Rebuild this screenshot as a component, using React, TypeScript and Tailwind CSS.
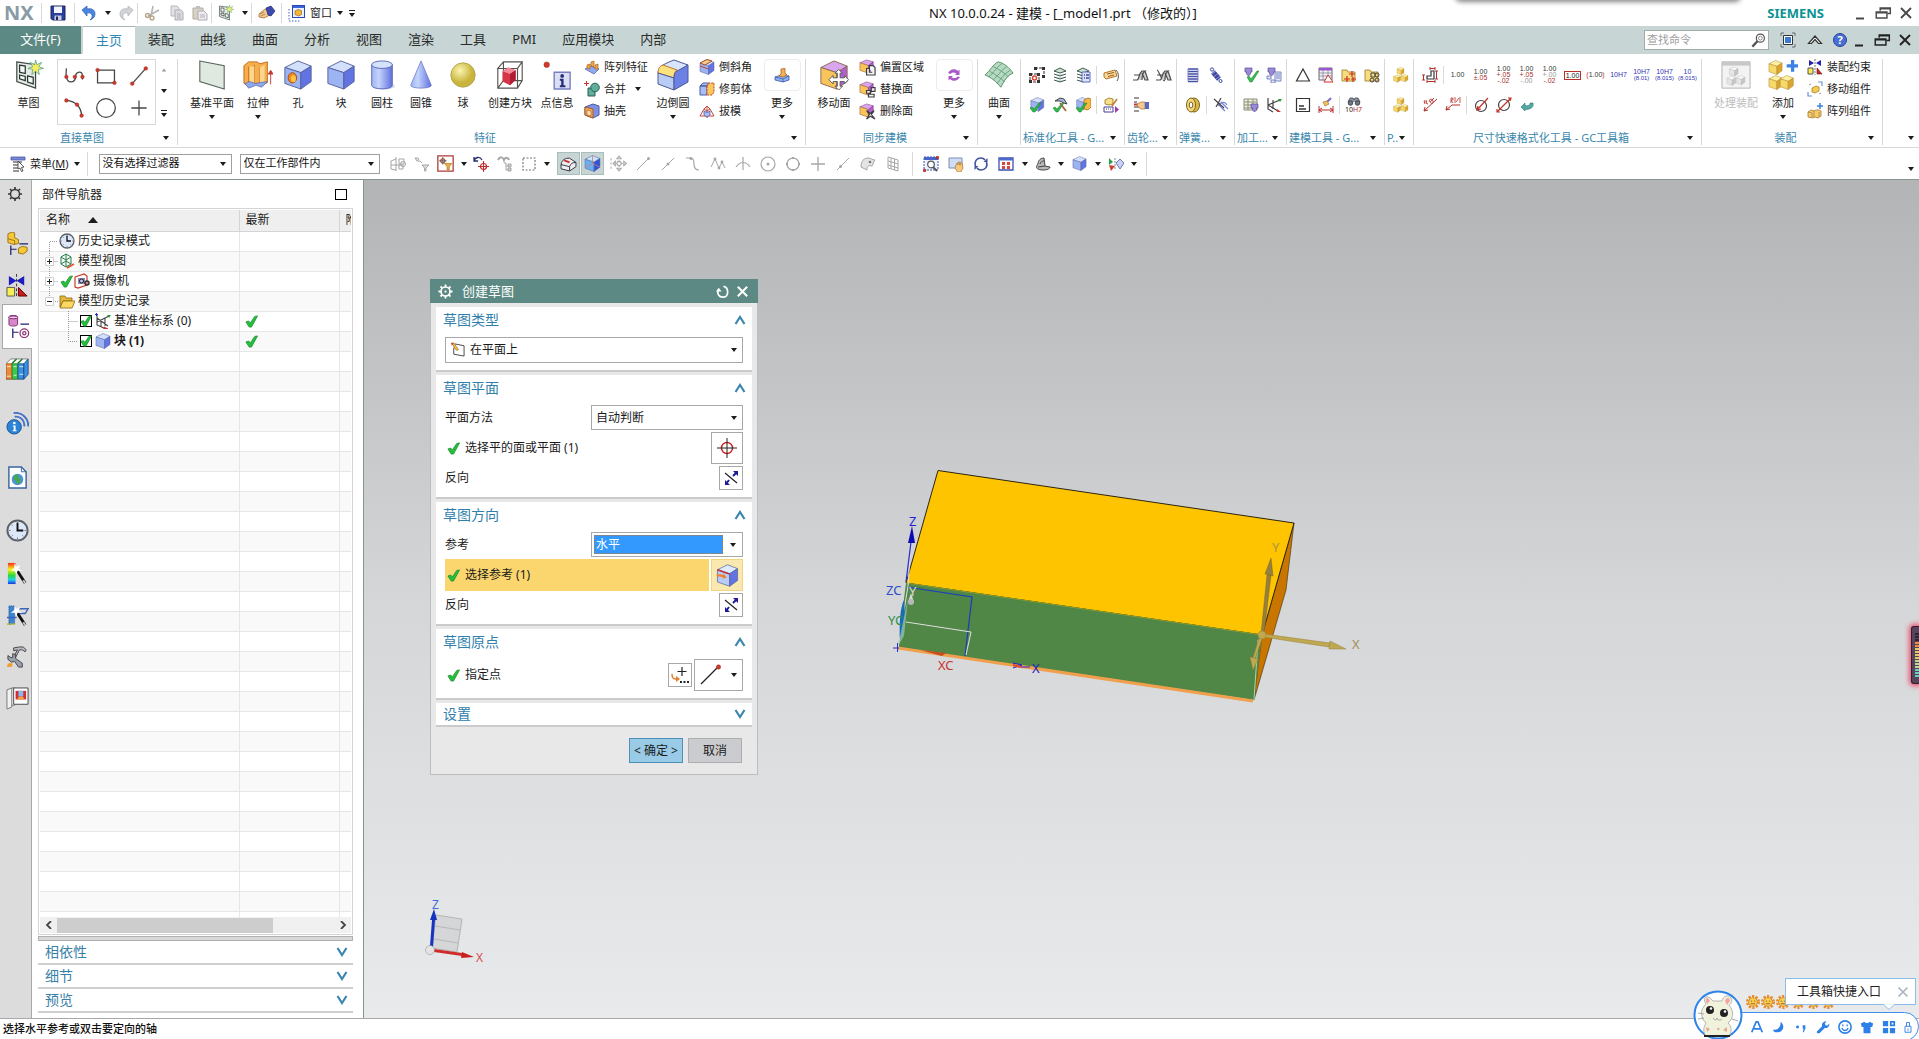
import { useState } from "react";
import type { ReactNode } from "react";
import clsx from "clsx";

/* ---------- shared bits ---------- */

interface SvgProps {
  box?: string;
  className?: string;
  children: ReactNode;
}

function Svg({ box = "0 0 16 16", className = "size-4", children }: SvgProps) {
  return (
    <svg viewBox={box} className={clsx("shrink-0", className)} fill="none" aria-hidden="true">
      {children}
    </svg>
  );
}

function Caret({ className = "" }: { className?: string }) {
  return (
    <svg viewBox="0 0 8 4" className={clsx("h-1 w-2 shrink-0", className)} aria-hidden="true">
      <path d="M1 0h6L4 4z" fill="#1c1c1c" />
    </svg>
  );
}

function OverflowCaret() {
  return (
    <svg viewBox="0 0 8 7" className="h-[7px] w-2 shrink-0" aria-hidden="true">
      <path d="M1 0h6v1H1zM1 3h6L4 7z" fill="#1c1c1c" />
    </svg>
  );
}

function Chevron({ up = false }: { up?: boolean }) {
  return (
    <Svg box="0 0 12 10" className="h-[10px] w-3">
      <path d={up ? "M1.500 9L6 2l4.500 7" : "M1.500 1L6 8l4.500-7"} stroke="#3c86ae" strokeWidth="2.2" />
    </Svg>
  );
}

function Check({ className = "size-[13px]" }: { className?: string }) {
  return (
    <Svg box="0 0 14 14" className={className}>
      <path d="M1 7.500l3-1 1.700 2L10.500 1.500l3-.5L7 13H4.500z" fill="#25c03a" stroke="#158a2c" strokeWidth=".8" />
    </Svg>
  );
}

interface CubeProps {
  top?: string;
  left?: string;
  right?: string;
  line?: string;
}

// drawn on a 32 x 32 grid
function CubeShape({ top = "#d3e0fb", left = "#9db4f2", right = "#6274e2", line = "#56619c" }: CubeProps) {
  return (
    <g stroke={line} strokeWidth="1" strokeLinejoin="round">
      <path d="M2 8L16 1l14 5.500-11 7z" fill={top} />
      <path d="M2 8l17 5.500V31L2 25z" fill={left} />
      <path d="M30 6.500V23l-11 8V13.500z" fill={right} />
    </g>
  );
}

function CubeIcon({ className = "size-4", children, ...faces }: CubeProps & { className?: string; children?: ReactNode }) {
  return (
    <Svg box="0 0 32 32" className={className}>
      <CubeShape {...faces} />
      {children}
    </Svg>
  );
}

const gold = { top: "#fdf0a0", left: "#f6d968", right: "#dca62c", line: "#a8812c" };
const pale = { top: "#f8f8f8", left: "#e6e6e6", right: "#c6c6c6", line: "#aaa" };

function YellowBlocks() {
  return (
    <Svg box="0 0 64 64">
      <g transform="translate(14 0)"><CubeShape {...gold} /></g>
      <g transform="translate(30 28)"><CubeShape {...gold} /></g>
      <g transform="translate(0 30)"><CubeShape {...gold} /></g>
    </Svg>
  );
}

/* ---------- quick access and window icons ---------- */

const saveIcon = (
  <Svg>
    <path d="M1 1h14v14H2.500L1 13.500z" fill="#2b3f9b" stroke="#1c2760" />
    <path d="M4 1.500h8V8H4z" fill="#f2f4ff" />
    <path d="M4.500 10.500h7V15h-7z" fill="#c9cee6" />
    <path d="M6 11.500h2V15H6z" fill="#1c2760" />
  </Svg>
);
const undoIcon = (
  <Svg>
    <path d="M1 5l5-4v3c5-1 8 1 8 5 0 3-2 5-5 6 2-2 2.500-3.500 2-5C10.300 8 8.500 7.500 6 8v3z" fill="#4a86e0" stroke="#2a5bb0" strokeWidth=".7" />
  </Svg>
);
const redoIcon = (
  <Svg>
    <path d="M15 5l-5-4v3C5 3 2 5 2 9c0 3 2 5 5 6-2-2-2.500-3.500-2-5C5.700 8 7.500 7.500 10 8v3z" fill="#d2d4d8" stroke="#a9adb3" strokeWidth=".7" />
  </Svg>
);
const cutIcon = (
  <Svg>
    <path d="M9 1L7 11M15 5L4 11" stroke="#b4b4b4" strokeWidth="1.600" />
    <circle cx="3.500" cy="10.500" r="1.900" stroke="#b8a890" strokeWidth="1.500" />
    <circle cx="8" cy="13" r="1.900" stroke="#b8a890" strokeWidth="1.500" />
  </Svg>
);
const copyIcon = (
  <Svg>
    <path d="M2 1h6l2 2v8H2z" fill="#e3e3e6" stroke="#b9b9be" />
    <path d="M6 5h6l2 2v8H6z" fill="#dcdce0" stroke="#aeaeb4" />
    <path d="M8 9h4M8 11h4M8 13h4" stroke="#b0b0b6" />
  </Svg>
);
const pasteIcon = (
  <Svg>
    <path d="M1 3h10v11H1z" fill="#d8d2c4" stroke="#b3ada0" />
    <path d="M4 1h4v3H4z" fill="#c0c0c0" />
    <path d="M6 6h6l3 3v6H6z" fill="#ececf0" stroke="#adadb3" />
    <path d="M8 10h5M8 12h5" stroke="#b0b0b6" />
  </Svg>
);
const touchIcon = (
  <Svg box="0 0 18 16" className="h-4 w-[18px]">
    <path d="M1 9l6-5 5 2v4l-6 3-5-1z" fill="#f0c890" stroke="#a87038" strokeWidth=".8" />
    <path d="M8 3l5-2 4 5-4 5-3-1z" fill="#3c4ab0" stroke="#20286a" strokeWidth=".7" />
    <path d="M2 9l4-2M3 11l4-2" stroke="#a87038" strokeWidth=".8" />
  </Svg>
);
const windowIcon = (
  <Svg box="0 0 18 18" className="size-[18px]">
    <path d="M1 5v12h11" stroke="#4060c8" strokeDasharray="1.500 1.500" />
    <rect x="4.500" y="1.500" width="12" height="12" fill="#eaf0ff" stroke="#2948b4" />
    <path d="M5 2h11v2H5z" fill="#3c64d8" />
    <path d="M7 7l3-1.500 3.500 1v4L10.500 12 7 10.500z" fill="#f2b838" stroke="#9c6a10" strokeWidth=".7" />
  </Svg>
);
const sketchShape = (
  <>
    <path d="M3 2l20 3v25L3 23z" fill="#e3ebe4" stroke="#3e4844" strokeWidth="1.300" />
    <path d="M6 5.500l6 1v8L6 13zM14.500 17l6 1.500v7l-6-2zM6 16l6 1.500V22l-6-2z" stroke="#2c3431" strokeWidth="1.300" fill="#f5f9f5" />
    <path d="M23 0l1.500 5 5-2.500-3 4.500 5 2-5.500 1 1 5.500-4-3.500-4 3.500 1-5.500-5-1 5-2-3-4.500 5 2.500z" fill="#f4ee60" stroke="#4e9a94" strokeWidth=".8" />
  </>
);

function WindowControls({ color, className }: { color: string; className: string }) {
  return (
    <div className={clsx("flex items-center gap-[6px]", className)}>
      <button type="button" aria-label="最小化">
        <Svg><path d="M4 13.500h8" stroke={color} strokeWidth="2" /></Svg>
      </button>
      <button type="button" aria-label="还原">
        <Svg className="size-[18px]">
          <path d="M5.500 6V3.500h9v5H12M5.500 4.200h9" stroke={color} strokeWidth="1.300" />
          <path d="M2 7h9.500v5.500H2zM2 7.700h9" stroke={color} strokeWidth="1.300" />
        </Svg>
      </button>
      <button type="button" aria-label="关闭">
        <Svg><path d="M3 3l10 10M13 3L3 13" stroke={color} strokeWidth="1.900" /></Svg>
      </button>
    </div>
  );
}

function VSep({ className = "h-7" }: { className?: string }) {
  return <span className={clsx("w-px shrink-0 bg-[#d9d9d9]", className)} />;
}

function IconCell({ label, children, className = "w-[23px]" }: { label: string; children: ReactNode; className?: string }) {
  return (
    <button type="button" aria-label={label} className={clsx("flex h-6 shrink-0 items-center justify-center", className)}>
      {children}
    </button>
  );
}

function TitleBar() {
  return (
    <header className="flex h-[26px] shrink-0 items-center bg-white">
      <div className="flex h-full w-[48%] shrink-0 items-center">
        <span className="w-[41px] pl-1 text-[20px] leading-[26px] font-bold text-[#8a9ba6]">NX</span>
        <VSep className="h-5" />
        <IconCell label="保存" className="w-[32px]">{saveIcon}</IconCell>
        <VSep className="h-5" />
        <IconCell label="撤消" className="w-[27px]">{undoIcon}</IconCell>
        <Caret className="mx-0.5" />
        <IconCell label="重做" className="w-[23px]">{redoIcon}</IconCell>
        <VSep className="h-5" />
        <IconCell label="剪切" className="w-[27px]">{cutIcon}</IconCell>
        <IconCell label="复制">{copyIcon}</IconCell>
        <IconCell label="粘贴">{pasteIcon}</IconCell>
        <VSep className="h-5" />
        <IconCell label="草图" className="w-[27px]">
          <Svg box="0 0 32 32">{sketchShape}</Svg>
        </IconCell>
        <Caret className="mx-0.5" />
        <VSep className="h-5" />
        <IconCell label="触控" className="w-[29px]">{touchIcon}</IconCell>
        <VSep className="h-5" />
        <button type="button" className="flex items-center gap-1 pl-[6px] text-[11px] leading-4">
          {windowIcon}
          窗口
          <Caret />
        </button>
        <span className="pl-1"><OverflowCaret /></span>
      </div>
      <h1 className="pl-2 text-[13px] leading-[26px] whitespace-nowrap text-[#111]">NX 10.0.0.24 - 建模 - [_model1.prt （修改的）]</h1>
      <div className="ml-auto flex items-center pr-[5px]">
        <span className="text-[13px] leading-[26px] font-bold text-[#0b9292]">SIEMENS</span>
        <WindowControls color="#4a4a4a" className="ml-7" />
      </div>
    </header>
  );
}

/* ---------- ribbon tabs ---------- */

const TABS = ["主页", "装配", "曲线", "曲面", "分析", "视图", "渲染", "工具", "PMI", "应用模块", "内部"];

function TabBar() {
  const [active, setActive] = useState("主页");
  return (
    <nav className="flex h-7 shrink-0 items-stretch bg-[#c7d6d5] text-[13px] text-[#2a2a2a]">
      <button type="button" className="mr-[2px] w-[81px] bg-[#5c8983] text-white">文件(F)</button>
      {TABS.map((t) => (
        <button
          key={t}
          type="button"
          onClick={() => setActive(t)}
          className={clsx("px-[13px]", t === active && "border-t border-[#a9b5b4] bg-white text-[#2f88b3]")}
        >
          {t}
        </button>
      ))}
      <div className="ml-auto flex items-center pr-[6px]">
        <div className="flex h-5 w-[125px] items-center border border-[#a2acac] bg-white">
          <input
            type="text"
            aria-label="查找命令"
            placeholder="查找命令"
            className="w-0 flex-1 px-0.5 text-[11px] outline-none placeholder:text-[#a0a0a0]"
          />
          <Svg className="mr-0.5 size-[15px]">
            <circle cx="10" cy="5.500" r="4.300" stroke="#555" strokeWidth="1.300" />
            <circle cx="10" cy="5.500" r="2" stroke="#888" />
            <path d="M7 8.500L1.500 14.500" stroke="#555" strokeWidth="2.500" />
          </Svg>
        </div>
        <button type="button" aria-label="全屏" className="ml-[11px]">
          <Svg>
            <path d="M1 4V1h3M12 1h3v3M15 12v3h-3M4 15H1v-3" stroke="#6a6a6a" />
            <path d="M3.500 3.500h9v9h-9z" fill="#fff" stroke="#333" />
            <path d="M5 5h6v6H5z" fill="#3a7ad0" />
          </Svg>
        </button>
        <button type="button" aria-label="最小化功能区" className="ml-[11px]">
          <Svg><path d="M1.500 11.500L8 4l6.500 7.500h-3L8 7.500l-3.500 4z" fill="#fff" stroke="#333" strokeWidth="1.200" /></Svg>
        </button>
        <button type="button" aria-label="帮助" className="ml-[10px] flex size-[14px] items-center justify-center rounded-full border border-[#23429e] bg-[#4a6ed2] text-[11px] leading-3 font-bold text-white">
          ?
        </button>
        <WindowControls color="#222" className="ml-1" />
      </div>
    </nav>
  );
}

/* ---------- ribbon icons ---------- */

const redDot = (x: number, y: number, r = 1.8) => <circle cx={x} cy={y} r={r} fill="#d03a2c" stroke="#8c1c14" strokeWidth=".4" />;

const bigIcons = {
  sketch: <Svg box="0 0 32 32" className="size-[30px]">{sketchShape}</Svg>,
  plane: (
    <Svg box="0 0 32 32" className="size-[30px]">
      <path d="M3 1l26 5v25L3 23z" fill="#dfe9df" stroke="#59665e" strokeWidth="1.200" />
    </Svg>
  ),
  extrude: (
    <Svg box="0 0 32 32" className="size-[30px]">
      <path d="M1 6l5-4h9l3 2 8-2v22l-7 4-5-3-8 3-5-3z" fill="#f6ae4c" stroke="#c06a1c" />
      <path d="M6 7v20M12 5v21M18 8v18" stroke="#c8701c" />
      <path d="M7 7h5v18l-5 2zM18 8l5-3v19l-5 2z" fill="#fbd68e" />
      <path d="M2 25l5-2 6 2 6-1 7-1-6 6-6-2-8 3z" fill="#93a8ea" stroke="#5060a8" strokeWidth=".7" />
      <path d="M29.500 26V12M27 15l2.500-4 2.500 4z" stroke="#c83a30" fill="#c83a30" />
    </Svg>
  ),
  hole: (
    <CubeIcon className="size-[30px]">
      <ellipse cx="10" cy="19" rx="4.500" ry="5.500" fill="#f58a20" stroke="#a04a10" />
      <ellipse cx="11.200" cy="20" rx="2.600" ry="3.800" fill="#fbc444" />
    </CubeIcon>
  ),
  block: <CubeIcon className="size-[30px]" />,
  cylinder: (
    <Svg box="0 0 32 32" className="size-[30px]">
      <ellipse cx="18" cy="28" rx="12" ry="3.500" fill="#d8dae6" />
      <path d="M5 5v22c0 5 22 5 22 0V5z" fill="url(#cylFill)" stroke="#5c68b4" />
      <ellipse cx="16" cy="5" rx="11" ry="4" fill="#d5e2fc" stroke="#5c68b4" />
      <defs>
        <linearGradient id="cylFill"><stop offset="0" stopColor="#9fb4f4" /><stop offset=".35" stopColor="#c4d4fb" /><stop offset="1" stopColor="#6070e0" /></linearGradient>
      </defs>
    </Svg>
  ),
  cone: (
    <Svg box="0 0 32 32" className="size-[30px]">
      <path d="M16 1L5 27c0 4 22 4 22 0z" fill="url(#cylFill)" stroke="#6a78c0" strokeWidth=".8" />
    </Svg>
  ),
  sphere: (
    <Svg box="0 0 32 32" className="size-[30px]">
      <defs>
        <radialGradient id="ball" cx=".38" cy=".32"><stop offset="0" stopColor="#fbf6b0" /><stop offset="1" stopColor="#c9b43c" /></radialGradient>
      </defs>
      <circle cx="16" cy="16" r="13" fill="url(#ball)" stroke="#a8983c" strokeWidth=".8" />
    </Svg>
  ),
  box: (
    <Svg box="0 0 32 32" className="size-[30px]">
      <path d="M3 9l6-7h20l-5 7zM3 9v21h21V9M29 2v20l-5 8M9 2v20l-6 8M9 22h20" stroke="#55524f" strokeWidth="1.200" />
      <path d="M8 12l6-4 8 3v10l-6 6-8-4z" fill="#d83448" />
      <path d="M8 12l6-4 8 3-6 4z" fill="#f08a98" />
      <path d="M16 15l6-4v10l-6 6z" fill="#b01c34" />
    </Svg>
  ),
  pointInfo: (
    <Svg box="0 0 32 32" className="size-[30px]">
      {redDot(5, 5, 3)}
      <path d="M13 13h17v18H13z" fill="#dcdff4" stroke="#7680c0" strokeWidth="1.500" />
      <path d="M19 20h4v7h2v2h-6v-2h1.500v-5H19z" fill="#262c78" />
      <circle cx="21.500" cy="17" r="2" fill="#262c78" />
    </Svg>
  ),
  edgeBlend: (
    <Svg box="0 0 32 32" className="size-8">
      <path d="M1 14C2 7 6 6 12 3l5-2 14 5-9 6c-3 2-4 4-4 8z" fill="#d8e5fc" stroke="#4c5a94" />
      <path d="M1 14c0-5 2-7 5-8l14 5c-2 1-3 4-3 8z" fill="#fbe27c" stroke="#c0762c" />
      <path d="M1 14l16 5v12L1 25z" fill="#b9ccf6" stroke="#4c5a94" />
      <path d="M31 6v17l-14 8V19c0-5 2-7 5-8z" fill="#6c80e6" stroke="#4c5a94" />
    </Svg>
  ),
  more: (
    <Svg>
      <path d="M1 10l6-2 8 1v4l-6 2-8-2z" fill="#8fb0ee" stroke="#3858a8" strokeWidth=".8" />
      <path d="M1 10l8 2 6-3M9 12v3" stroke="#3858a8" strokeWidth=".7" />
      <path d="M7 2l4-.5V6l2 2-4 2-4-1 2-2z" fill="#f2b05c" stroke="#b06418" strokeWidth=".8" />
    </Svg>
  ),
  moveFace: (
    <CubeIcon className="size-[30px]" top="#d9a6ee" left="#f9c45c" right="#b45fd0" line="#8a6a50">
      <path d="M21 10l4 4h-2.500v5H27v-2.500l4.500 4.500L27 25.500V23h-4.500v5H25l-4 4-4-4h2.500v-5H15v2.500L10.500 21l4.500-4.500V19h4.500v-5H17z" fill="#fff" stroke="#555" />
    </CubeIcon>
  ),
  refresh: (
    <Svg>
      <path d="M2 6c2-4 7-5 10-2l1.500-1.500V8H9l1.500-1.500C8 5 6 5 4.500 7zM14 10c-2 4-7 5-10 2l-1.500 1.500V9H7l-1.500 1.200C8 11.500 10 11.500 11.500 9.500z" fill="#a858c8" />
    </Svg>
  ),
  surface: (
    <Svg box="0 0 32 32" className="size-[30px]">
      <path d="M1 16C6 12 11 3 15 2c6 1 12 6 16 12-6 2-10 9-13 15C13 23 7 18 1 16z" fill="#b7d9c2" stroke="#4f8d68" />
      <path d="M6 12c6 3 12 8 16 11M10 7c6 3 12 7 16 11M5 18C10 14 15 6 19 4M10 21c5-4 9-11 14-14M14 25c4-5 8-11 14-14" stroke="#5b9a74" strokeWidth=".9" />
    </Svg>
  ),
  asmProcess: (
    <Svg box="0 0 32 32" className="size-[30px]">
      <path d="M1 2h30v28H1z" fill="#f3f3f3" stroke="#b0b0b0" />
      <path d="M1 2h30v4H1z" fill="#c8c8c8" />
      <g transform="translate(5 7) scale(.33)">
        <g transform="translate(10 0)"><CubeShape {...pale} /></g>
        <g transform="translate(32 28)"><CubeShape {...pale} /></g>
        <g transform="translate(2 30)"><CubeShape {...pale} /></g>
      </g>
    </Svg>
  ),
  add: (
    <Svg box="0 0 64 64" className="size-[30px]">
      <CubeShape {...gold} />
      <g transform="translate(0 32)"><CubeShape {...gold} /></g>
      <g transform="translate(24 32)"><CubeShape {...gold} /></g>
      <path d="M49 0h7v9h8v7h-8v9h-7v-9h-9V9h9z" fill="#3c82e4" />
    </Svg>
  ),
};

const curveIcons = [
  { name: "轮廓", icon: <><path d="M4 4c-1 8 0 16 5 16s6-3 6-7 8-8 8 0v4" stroke="#454545" strokeWidth="1.500" />{redDot(4, 14, 2.2)}{redDot(14, 14, 2.2)}{redDot(23, 14, 2.2)}</> },
  { name: "矩形", icon: <><path d="M3 6h20v15H3z" stroke="#454545" strokeWidth="1.500" />{redDot(3, 6, 2.2)}{redDot(23, 21, 2.2)}</> },
  { name: "直线", icon: <><path d="M5 22L21 4" stroke="#454545" strokeWidth="1.500" />{redDot(5, 22, 2.2)}{redDot(21, 4, 2.2)}</> },
  { name: "圆弧", icon: <><path d="M4 4c11 1 18 8 18 19" stroke="#454545" strokeWidth="1.500" />{redDot(4, 4, 2.2)}{redDot(16.500, 9, 2.2)}{redDot(22, 22, 2.2)}</> },
  { name: "圆", icon: <circle cx="13" cy="13" r="11" stroke="#454545" strokeWidth="1.500" /> },
  { name: "点", icon: <path d="M13 4v18M4 13h18" stroke="#454545" strokeWidth="1.500" /> },
];

const patternIcon = (
  <Svg>
    <path d="M1 10l5-3 9 3-5 5z" fill="#8fa9ec" stroke="#4c5ca4" strokeWidth=".7" />
    <path d="M3 6l3-1v5L3 9zM7 3l3-1v6L7 7zM11 6l3-1v5l-3 0z" fill="#f2a848" stroke="#a8641c" strokeWidth=".7" />
  </Svg>
);
const uniteIcon = (
  <Svg>
    <path d="M4 7h7v8H4z" fill="#5fae9c" stroke="#2d5c52" />
    <circle cx="11" cy="6.500" r="4.300" fill="#5fae9c" stroke="#2d5c52" />
    <path d="M0 2.500h5M2.500 0v5" stroke="#d03030" />
  </Svg>
);
const shellIcon = (
  <Svg>
    <path d="M1 4l8-3 6 2v9l-6 3-8-3z" fill="#7d90e6" stroke="#4c5ca4" />
    <path d="M1 4l8 2v9l-8-3z" fill="#f2a95c" stroke="#a85c20" />
    <path d="M3 7l4 1v5l-4-1z" fill="#fde0b0" stroke="#a85c20" strokeWidth=".6" />
  </Svg>
);
const chamferIcon = (
  <CubeIcon>
    <path d="M2 8L16 1l10 3-14 8z" fill="#f8cc8c" stroke="#a8502c" strokeWidth="2" />
    <path d="M2 14l17 6" stroke="#c0402c" strokeWidth="2" />
  </CubeIcon>
);
const trimIcon = (
  <Svg>
    <path d="M1 5h7v9H1zM1 5l3-3h6L8 5z" fill="#a9bdf6" stroke="#4c5ca4" />
    <path d="M8 5l2-3h5v9l-2 3H8z" fill="#fbc860" stroke="#c0441c" strokeDasharray="2 1" />
  </Svg>
);
const draftIcon = (
  <Svg>
    <path d="M8 3l3 3-3 2-3-2zM8 3v12M5 6L1 13h14l-4-7" stroke="#c04438" />
    <path d="M5 8l3 1.500L11 8v4l-3 2-3-2z" fill="#a9bdf6" stroke="#4c5ca4" strokeWidth=".8" />
  </Svg>
);
const syncCube = (d: string) => (
  <Svg box="0 0 18 18" className="size-[17px]">
    <path d="M1 4l7-3 7 2-5 4z" fill="#d9a6ee" stroke="#97589c" strokeWidth=".7" />
    <path d="M1 4l9 3v8l-9-3z" fill="#f9c45c" stroke="#a87038" strokeWidth=".7" />
    <path d="M15 3v7l-5 5V7z" fill="#b45fd0" stroke="#7c3c98" strokeWidth=".7" />
    <path d={d} fill="#f4f4f4" stroke="#3c3c3c" strokeWidth="1.200" />
  </Svg>
);
const mateIcon = (
  <Svg>
    <path d="M2 1l5 3-5 3zM14 1L9 4l5 3z" fill="#2222b0" />
    <path d="M8 0v16" stroke="#333" strokeWidth=".7" strokeDasharray="2 1" />
    <path d="M1 9h5v6H1z" fill="#f6ee50" stroke="#555" />
    <path d="M10 9l5 6h-5z" fill="#c82424" stroke="#701010" strokeWidth=".6" />
  </Svg>
);
const moveCompIcon = (
  <Svg>
    <path d="M5 7l4-2 3 1v4l-4 2-3-1z" fill="#f6cc50" stroke="#9a7420" strokeWidth=".7" />
    <path d="M11 1h4v4M1 11v4h4" stroke="#6a94d0" strokeWidth="1.200" />
    <path d="M2 4l2-1M12 13l2-1" stroke="#999" />
  </Svg>
);
const patternCompIcon = (
  <Svg>
    <path d="M1 9l3-2 3 1 2-1 3 0 2 1v5l-3 2-3-1-2 1-5-1z" fill="#f6cc70" stroke="#a87a30" strokeWidth=".8" />
    <path d="M1 9l4 1v4M7 8v6M12 9v5" stroke="#a87a30" strokeWidth=".7" />
    <path d="M13 0v6M10 3h6" stroke="#3c82e4" strokeWidth="1.500" />
  </Svg>
);

interface ToolItem {
  name: string;
  icon: ReactNode;
}

// a null entry draws a thin separator
type ToolRow = (ToolItem | null)[];

const layers = <path d="M2 4l6-3 6 3-6 2zM2 7l6 2 6-2M2 10l6 2 6-2M2 13l6 2 6-2" stroke="#3f5a50" fill="#cfe2d4" />;
const greenTick = <path d="M1 11l2-1 2 2 5-6 2 0-6 9H4z" fill="#2fb84a" stroke="#1a7c30" strokeWidth=".5" />;
const gearTooth = <path d="M0 13h4c2 0 2-7 5-9h3c-3 2-3 6-3 9M12 4l3 9h-3l-3-7M1 8h5" stroke="#4c4c4c" strokeWidth="1.200" fill="#d0d0d0" />;

const standardTools: ToolRow[] = [
  [
    { name: "属性工具", icon: <Svg><path d="M1 7h9v8H1zM6 1h9v8" stroke="#333" strokeDasharray="3 1" /><path d="M0 6h3v3H0zM8 6h3v3H8zM0 13h3v3H0zM8 13h3v3H8zM5 0h3v3H5zM13 0h3v3h-3zM13 8h3v3h-3z" fill="#333" /><circle cx="5.500" cy="11" r="2" fill="#fff" stroke="#e0402c" strokeWidth="1.500" /></Svg> },
    { name: "图层", icon: <Svg>{layers}</Svg> },
    { name: "图层清单", icon: <Svg>{layers}<path d="M7 5h8v10H7z" fill="#dfe4fb" stroke="#5c68c0" /><path d="M9 8h1M11 8h3M9 11h1M11 11h3" stroke="#3c48a0" strokeWidth="1.500" /></Svg> },
    null,
    { name: "标签", icon: <Svg><path d="M1 6l11-3 2 6-11 3-2-2z" fill="#f8d898" stroke="#b4742c" /><path d="M4 7l7-1.500M5 9.500l6-1.500" stroke="#9c5c1c" /><path d="M13 3c3 3 3 8 1 11" stroke="#555" /></Svg> },
  ],
  [
    { name: "检查块", icon: <Svg><g transform="scale(.46) translate(2 0)"><CubeShape /></g>{greenTick}</Svg> },
    { name: "检查工具", icon: <Svg><path d="M3 4l5-3 4 1 3 5-3-1-4-2z" fill="#a7b6e4" stroke="#444" />{greenTick}<path d="M8 6l6 8" stroke="#a07040" strokeWidth="1.800" /></Svg> },
    { name: "检查装配", icon: <Svg><g transform="scale(.4) translate(2 0)"><CubeShape /></g><path d="M9 3l4-2 3 1v8l-3 3-4-1z" fill="#f6b840" stroke="#a87018" strokeWidth=".8" />{greenTick}</Svg> },
    null,
    { name: "替换", icon: <Svg><path d="M2 3l4-2 4 1v5L6 8 2 7z" fill="#fbe08c" stroke="#94701c" strokeWidth=".8" /><path d="M1 10h9v5H1zM3 12h1M5 12h1M7 12h1" stroke="#4a3c90" /><path d="M14 2L9 9" stroke="#c87830" strokeWidth="1.500" /><path d="M12 9l4 3.500-4 3.500z" fill="#9c38b0" /></Svg> },
  ],
];

const gearTools: ToolRow[] = [
  [
    { name: "圆柱齿轮", icon: <Svg>{gearTooth}</Svg> },
    { name: "锥齿轮", icon: <Svg><path d="M1 3c2 0 3 9 8 11" stroke="#4c4c4c" strokeWidth="1.200" />{gearTooth}</Svg> },
  ],
  [{ name: "齿轮列表", icon: <Svg><path d="M1 1h5M1 5h3M1 10h5M1 14h5" stroke="#333" /><path d="M1 7.500h4" stroke="#d03030" strokeWidth="2" /><path d="M4 7l4-2h4v7H8l-3-2z" fill="#f2c890" stroke="#a87038" strokeWidth=".7" /><path d="M12 5h4v7h-4z" fill="#5868c8" /></Svg> }],
];

const springTools: ToolRow[] = [
  [
    { name: "压缩弹簧", icon: <Svg><path d="M3 2h10M3 4.500h10M3 7h10M3 9.500h10M3 12h10M3 14.500h10" stroke="#444ea4" strokeWidth="1.400" /><path d="M3 2v12M13 2v12" stroke="#7a84cc" /></Svg> },
    { name: "拉伸弹簧", icon: <Svg><path d="M5 5l6 7" stroke="#3c46a0" strokeWidth="5" /><path d="M4 7l4-3M6 9.500l4-3M8 12l4-3" stroke="#a8b0ec" strokeWidth=".8" /><circle cx="4" cy="2.500" r="1.600" stroke="#3c46a0" /><circle cx="12.500" cy="14" r="1.500" stroke="#3c46a0" /></Svg> },
  ],
  [
    { name: "碟形弹簧", icon: <Svg><ellipse cx="9" cy="8" rx="5.500" ry="7" fill="#d9b848" stroke="#7c641c" /><ellipse cx="6" cy="8" rx="4.500" ry="7" fill="#f2d878" stroke="#7c641c" /><ellipse cx="6" cy="8" rx="1.800" ry="3" fill="#fff" stroke="#7c641c" /></Svg> },
    null,
    { name: "删除弹簧", icon: <Svg><path d="M5 7l7 7M8 5l7 7M5 9c2-4 7-5 9-1" stroke="#7a86d0" strokeWidth="1.300" /><path d="M1 2l10 9M8 1L3 10" stroke="#444" strokeWidth="1.200" /></Svg> },
  ],
];

const chuck = <path d="M2 1h7v4H7.500v2L5.500 9 3.500 7V5H2z" fill="#9a8ad4" stroke="#5c4ca0" strokeWidth=".7" />;
const machiningTools: ToolRow[] = [
  [
    { name: "加工准备", icon: <Svg>{chuck}<path d="M4 10l2-1 2 3 6-8 2 0-7 11H7z" fill="#35c04c" stroke="#1a7c30" strokeWidth=".5" /></Svg> },
    { name: "工序", icon: <Svg>{chuck}<path d="M1 9h4v3H1zM5 13h4v3H5zM9 5h6v9H9z" fill="#e0e6fa" stroke="#7c88c0" /><path d="M10 7h4M10 9h4M10 11h4" stroke="#7c88c0" /></Svg> },
  ],
  [
    { name: "刀具表", icon: <Svg><path d="M1 2h13v11H1zM1 5h13M1 8h13M1 11h13M5 2v11M10 2v11" stroke="#8a9078" fill="#eef0dc" /><g transform="translate(6 6)">{chuck}</g></Svg> },
    { name: "坐标", icon: <Svg><path d="M2 1v11l5 3M2 8l12-5M2 8l10 6M7 3v9" stroke="#444" strokeWidth="1.200" /><path d="M12 2l4 0-2 3z" fill="#2c9c44" /><path d="M11 12l4 3-4 0z" fill="#d03030" /></Svg> },
  ],
];

const folder = <path d="M1 3h5l1 2h7v9H1z" fill="#f6dc7c" stroke="#a8842c" strokeWidth=".9" />;
const modelTools: ToolRow[] = [
  [
    { name: "三角形", icon: <Svg><path d="M8 2l6.500 12h-13z" stroke="#333" strokeWidth="1.200" /></Svg> },
    { name: "表格", icon: <Svg><path d="M1 1h13v12H1z" fill="#f4f0ff" stroke="#666" /><path d="M1 1h13v2.500H1z" fill="#9858d0" /><path d="M1 6h13M1 9h13M5 3v10M10 3v10" stroke="#888" strokeWidth=".8" /><path d="M10 8l5 7H6z" fill="#fff" stroke="#d03030" /></Svg> },
    { name: "添加到库", icon: <Svg>{folder}<path d="M11 4v6M8 7h6M6 9v6M3 12h6M12 10v5M10 12h5" stroke="#c82c20" strokeWidth="1.200" /></Svg> },
    { name: "库零件", icon: <Svg>{folder}<path d="M7 6h4v4H7z" stroke="#444" /><circle cx="13" cy="8" r="2" stroke="#444" /><circle cx="8" cy="13" r="2" stroke="#444" /><circle cx="13" cy="13" r="2" stroke="#444" /></Svg> },
  ],
  [
    { name: "注释", icon: <Svg><path d="M1.500 1.500h13v13h-13z" stroke="#333" strokeWidth="1.200" /><path d="M4 9h5M4 12h7" stroke="#333" strokeWidth="1.400" /></Svg> },
    { name: "尺寸刷", icon: <Svg><path d="M13 1l-4 4" stroke="#7a6ac0" strokeWidth="2" /><path d="M5 5l4-1 2 3-4 2z" fill="#f2c468" stroke="#a87820" strokeWidth=".7" /><path d="M1 9v7M15 9v7M1 13h14M4 11l-3 2 3 2M12 11l3 2-3 2" stroke="#b83028" /></Svg> },
    null,
    { name: "公差查询", icon: <span className="flex flex-col items-center"><Svg box="0 0 16 9" className="h-[9px] w-4"><path d="M2 5l2-4h3l1 2 1-2h3l2 4" fill="#8c98a4" stroke="#444" strokeWidth=".8" /><circle cx="4.500" cy="6" r="2.300" fill="#6c7884" stroke="#333" strokeWidth=".8" /><circle cx="11.500" cy="6" r="2.300" fill="#6c7884" stroke="#333" strokeWidth=".8" /></Svg><span className="text-[7px] leading-[7px]">10<span className="text-[#b83028]">H7</span></span></span> },
  ],
];

const partsTools: ToolRow[] = [
  [{ name: "零件", icon: <YellowBlocks /> }],
  [{ name: "零件清单", icon: <YellowBlocks /> }],
];

interface DimTextProps {
  top: string;
  mid?: string;
  low?: string;
  className?: string;
  midClass?: string;
  lowClass?: string;
}

function DimText({ top, mid, low, className = "text-[#333]", midClass = "text-[#a83030]", lowClass = "text-[#a83030]" }: DimTextProps) {
  return (
    <span className={clsx("flex flex-col items-center font-['Liberation_Sans'] text-[7px] leading-[6px]", className)}>
      <span>{top}</span>
      {mid && <span className={midClass}>{mid}</span>}
      {low && <span className={lowClass}>{low}</span>}
    </span>
  );
}

const blue = "text-[#3434b0]";
const blueSmall = "text-[6px] text-[#3434b0]";
const grey = "text-[#9a9a9a]";
const dimensionTools: ToolRow[] = [
  [
    { name: "尺寸", icon: <Svg><path d="M5 12h7V4H9v5H5z" stroke="#333" strokeWidth="1.200" /><path d="M1.500 8v5M0 8h3M0 13h3M14.500 4v8M13 4h3M13 12h3M8 1.500h5M8 0v3M13 0v3M5 14.500h8M5 13v3M13 13v3" stroke="#b83028" /></Svg> },
    null,
    { name: "1.00", icon: <DimText top="1.00" /> },
    { name: "双向公差", icon: <DimText top="1.00" mid="±.05" /> },
    { name: "双向不等公差", icon: <DimText top="1.00" mid="+.05" low="-.02" /> },
    { name: "单向正公差", icon: <DimText top="1.00" mid="+.05" low="-.00" lowClass={grey} /> },
    { name: "单向负公差", icon: <DimText top="1.00" mid="+.00" low="-.02" midClass={grey} /> },
    { name: "基本", icon: <span className="border border-[#b83028] px-px font-['Liberation_Sans'] text-[7px] leading-[7px]">1.00</span> },
    { name: "参考", icon: <span className="font-['Liberation_Sans'] text-[7px] text-[#333]"><span className="text-[#b83028]">(</span>1.00<span className="text-[#b83028]">)</span></span> },
    { name: "10H7", icon: <DimText top="10H7" className={blue} /> },
    { name: "10H7 上限", icon: <DimText top="10H7" mid="(8.01)" className={blue} midClass={blueSmall} /> },
    { name: "10H7 双限", icon: <DimText top="10H7" mid="(8.015)" className={blue} midClass={blueSmall} /> },
    { name: "10 限值", icon: <DimText top="10" mid="(8.015)" className={blue} midClass={blueSmall} /> },
  ],
  [
    { name: "半径", icon: <Svg><path d="M15 2L2 14M2 14l1-4M2 14l4-1" stroke="#b83028" /><path d="M3 7l-1-3 3 0-1 2 2 1M8 5c-2-3 2-4 3-1s-2 3-3 1l4-4" stroke="#b83028" strokeWidth=".9" /></Svg> },
    { name: "引出半径", icon: <Svg><path d="M1 13l6-5h8M1 13l1-4M1 13l4-1" stroke="#b83028" /><path d="M6 6V1h2v2H6l2 3M10 0v6M15 0v6M11 5l3-4" stroke="#b83028" strokeWidth=".8" /></Svg> },
    null,
    { name: "直径", icon: <Svg><circle cx="8" cy="9" r="5.500" stroke="#444" strokeWidth="1.200" /><path d="M15 1L4 13M5 9l-1 4 4-1" stroke="#c83028" strokeWidth="1.200" /></Svg> },
    { name: "过圆心直径", icon: <Svg><circle cx="8" cy="8" r="5.500" stroke="#444" strokeWidth="1.200" /><path d="M15 1L1 15M12 1l3 0-1 3M1 12v3h3" stroke="#c83028" strokeWidth="1.200" /></Svg> },
    { name: "返回", icon: <Svg><path d="M2 10l4-4v2.500c4 .5 5-.5 5-2.500h3c1 4-2 6.500-8 6.500V14z" fill="#52a8a4" stroke="#2c7874" strokeWidth=".6" /></Svg> },
  ],
];

/* ---------- ribbon ---------- */

interface GroupProps {
  label?: string;
  className: string;
  align?: "center" | "start";
  menu?: boolean;
  children: ReactNode;
}

function Group({ label = "", className, align = "center", menu = true, children }: GroupProps) {
  return (
    <section className={clsx("flex shrink-0 flex-col border-r border-[#d8d8d8]", className)}>
      <div className="flex h-[72px] items-start">{children}</div>
      <div className="flex h-[14px] items-center px-0.5">
        <span className={clsx("flex-1 overflow-hidden text-[11px] leading-[14px] whitespace-nowrap text-[#3a86ac]", align === "center" && "text-center")}>
          {label}
        </span>
        {menu && <Caret className="mr-[5px]" />}
      </div>
    </section>
  );
}

interface BigButtonProps {
  label: string;
  icon: ReactNode;
  className: string;
  menu?: boolean;
  framed?: boolean;
  disabled?: boolean;
}

function BigButton({ label, icon, className, menu = false, framed = false, disabled = false }: BigButtonProps) {
  return (
    <button
      type="button"
      disabled={disabled}
      className={clsx("flex shrink-0 flex-col items-center text-[11px] leading-4 whitespace-nowrap", className, disabled ? "text-[#bdbdbd]" : "text-[#222]")}
    >
      <span className={clsx("flex h-8 items-center justify-center", framed && "w-[37px] rounded-sm border border-[#ececec]")}>{icon}</span>
      <span className="mt-1">{label}</span>
      {menu && <Caret className="mt-1" />}
    </button>
  );
}

function SmallButtons({ items, className }: { items: (ToolItem & { menu?: boolean })[]; className: string }) {
  return (
    <div className={clsx("flex shrink-0 flex-col", className)}>
      {items.map((it) => (
        <button key={it.name} type="button" className="flex h-[22px] items-center gap-1 pb-[6px] text-[11px] leading-4 whitespace-nowrap text-[#222]">
          {it.icon}
          {it.name}
          {it.menu && <Caret className="ml-1" />}
        </button>
      ))}
    </div>
  );
}

function ToolGrid({ rows }: { rows: ToolRow[] }) {
  return (
    <div className="flex flex-col gap-[6px] pt-1 pl-1">
      {rows.map((row, i) => (
        <div key={i} className="flex items-center">
          {row.map((item, j) =>
            item ? <IconCell key={j} label={item.name}>{item.icon}</IconCell> : <VSep key={j} className="mx-[2px] h-[18px]" />
          )}
        </div>
      ))}
    </div>
  );
}

function Ribbon() {
  return (
    <div className="flex h-[94px] shrink-0 items-start overflow-hidden border-b border-[#d8d8d8] bg-white pt-[5px]">
      <Group label="直接草图" className="w-[178px]">
        <BigButton label="草图" icon={bigIcons.sketch} className="w-[57px]" />
        <div className="grid w-[99px] grid-cols-3 border border-[#d8d8d8]">
          {curveIcons.map((c) => (
            <button key={c.name} type="button" aria-label={c.name} className="flex h-8 items-center justify-center">
              <Svg box="0 0 26 26" className="size-[22px]">{c.icon}</Svg>
            </button>
          ))}
        </div>
        <div className="flex h-[66px] w-4 flex-col items-center justify-around">
          <svg viewBox="0 0 8 4" className="h-1 w-[6px]" aria-hidden="true"><path d="M1 4h6L4 0z" fill="#999" /></svg>
          <Caret />
          <OverflowCaret />
        </div>
      </Group>

      <Group label="特征" className="w-[628px]">
        <BigButton label="基准平面" icon={bigIcons.plane} className="ml-[7px] w-[54px]" menu />
        <BigButton label="拉伸" icon={bigIcons.extrude} className="w-[38px]" menu />
        <BigButton label="孔" icon={bigIcons.hole} className="w-[42px]" />
        <BigButton label="块" icon={bigIcons.block} className="w-[44px]" />
        <BigButton label="圆柱" icon={bigIcons.cylinder} className="w-[38px]" />
        <BigButton label="圆锥" icon={bigIcons.cone} className="w-[40px]" />
        <BigButton label="球" icon={bigIcons.sphere} className="w-[44px]" />
        <BigButton label="创建方块" icon={bigIcons.box} className="w-[50px]" />
        <BigButton label="点信息" icon={bigIcons.pointInfo} className="w-[44px]" />
        <SmallButtons
          className="w-[74px] pl-[5px]"
          items={[
            { name: "阵列特征", icon: patternIcon },
            { name: "合并", icon: uniteIcon, menu: true },
            { name: "抽壳", icon: shellIcon },
          ]}
        />
        <BigButton label="边倒圆" icon={bigIcons.edgeBlend} className="w-[40px]" menu />
        <SmallButtons
          className="w-[64px] pl-[6px]"
          items={[
            { name: "倒斜角", icon: chamferIcon },
            { name: "修剪体", icon: trimIcon },
            { name: "拔模", icon: draftIcon },
          ]}
        />
        <BigButton label="更多" icon={bigIcons.more} className="w-[50px]" menu framed />
      </Group>

      <Group label="同步建模" className="w-[172px]">
        <BigButton label="移动面" icon={bigIcons.moveFace} className="ml-1 w-[48px]" />
        <SmallButtons
          className="w-[74px] pl-px"
          items={[
            { name: "偏置区域", icon: syncCube("M8 10h3V7h4l2 2v8H8z M11 10v4h3") },
            { name: "替换面", icon: syncCube("M8 10h4v3H8zM13 7h4v4h-4zM10 14h6v3h-6z") },
            { name: "删除面", icon: syncCube("M8 8l4 3 4-3-3 4 4 5-5-3-4 3 3-5z") },
          ]}
        />
        <BigButton label="更多" icon={bigIcons.refresh} className="w-[44px]" menu framed />
      </Group>

      <Group className="w-[43px]" menu={false}>
        <BigButton label="曲面" icon={bigIcons.surface} className="w-[42px]" menu />
      </Group>

      <Group label="标准化工具 - G..." className="w-[104px]" align="start"><ToolGrid rows={standardTools} /></Group>
      <Group label="齿轮..." className="w-[52px]" align="start"><ToolGrid rows={gearTools} /></Group>
      <Group label="弹簧..." className="w-[58px]" align="start"><ToolGrid rows={springTools} /></Group>
      <Group label="加工..." className="w-[52px]" align="start"><ToolGrid rows={machiningTools} /></Group>
      <Group label="建模工具 - G..." className="w-[98px]" align="start"><ToolGrid rows={modelTools} /></Group>
      <Group label="P.." className="w-[29px]" align="start"><ToolGrid rows={partsTools} /></Group>
      <Group label="尺寸快速格式化工具 - GC工具箱" className="w-[288px]"><ToolGrid rows={dimensionTools} /></Group>

      <Group label="装配" className="w-[181px]">
        <BigButton label="处理装配" icon={bigIcons.asmProcess} className="ml-[6px] w-[56px]" disabled />
        <BigButton label="添加" icon={bigIcons.add} className="w-[38px]" menu />
        <SmallButtons
          className="pl-[5px]"
          items={[
            { name: "装配约束", icon: mateIcon },
            { name: "移动组件", icon: moveCompIcon },
            { name: "阵列组件", icon: patternCompIcon },
          ]}
        />
      </Group>
      <div className="flex h-[86px] flex-1 items-end justify-end pr-1 pb-[5px]"><Caret /></div>
    </div>
  );
}

/* ---------- selection bar ---------- */

const G = "#a6a6a6";
const snapIcons: ToolItem[] = [
  { name: "捕捉点", icon: <Svg className="size-[17px]"><path d="M8.500 1l2 2.500h-4zM8.500 15l2-2.500h-4zM1 3v2M1 7v2M1 11v2M15.500 8l-2.500-2v4zM3 8l2-2v4zM6 8h6M8.500 5v6" stroke={G} /><circle cx="8.500" cy="8" r="2" stroke={G} fill="#fff" /></Svg> },
  { name: "端点", icon: <Svg><path d="M2 14L14 2" stroke={G} /><circle cx="13.500" cy="2.500" r="1.500" fill={G} /></Svg> },
  { name: "中点", icon: <Svg><path d="M2 14L14 2" stroke={G} /><circle cx="8" cy="8" r="1.500" fill={G} /></Svg> },
  { name: "控制点", icon: <Svg><path d="M1 2h5c3 0 3 3 3 6s1 6 5 6" stroke={G} strokeWidth="1.200" /><circle cx="6" cy="2.500" r="1.500" fill={G} /></Svg> },
  { name: "极点", icon: <Svg><path d="M1 11l4-8 4 9 3-6 3 6" stroke={G} /><circle cx="5" cy="3" r="1.400" fill={G} /><circle cx="9" cy="12" r="1.400" fill={G} /><circle cx="12" cy="6" r="1.400" fill={G} /></Svg> },
  { name: "交点", icon: <Svg><path d="M1 11c4-6 10-6 14 0M8 1v13" stroke={G} strokeWidth="1.200" /></Svg> },
  { name: "圆心", icon: <Svg><circle cx="8" cy="8" r="7" stroke={G} strokeWidth="1.200" /><circle cx="8" cy="8" r="1.500" fill={G} /></Svg> },
  { name: "象限点", icon: <Svg><circle cx="8" cy="8" r="6" stroke={G} strokeWidth="1.200" /><path d="M8 1v2M8 13v2M1 8h2M13 8h2" stroke={G} strokeWidth="2.500" /></Svg> },
  { name: "现有点", icon: <Svg><path d="M8 1v14M1 8h14" stroke={G} strokeWidth="1.300" /></Svg> },
  { name: "曲线上的点", icon: <Svg><path d="M2 14L14 2" stroke={G} /><circle cx="5.500" cy="10.500" r="1.500" fill={G} /></Svg> },
  { name: "面上的点", icon: <Svg><path d="M1 11c0-6 3-9 7-9 3 0 4 2 7 2-2 2-2 5-3 6-3-1-5 0-5 4z" fill="#e4e4e4" stroke={G} /><circle cx="10" cy="6" r="1.300" fill="#777" /></Svg> },
  { name: "有界栅格", icon: <Svg><path d="M3 1l10 3v11L3 12zM3 5l10 3M3 9l10 3M6 2v11M9.500 3v11" stroke={G} /></Svg> },
];

const filterIcons: ToolItem[] = [
  { name: "装配过滤", icon: <Svg><path d="M6 1v14M1 5l5-2M1 5v8l5 1M1 9h9M9 3h5v5H9zM9 9h4v4H9z" stroke={G} /><circle cx="13" cy="8" r="2.500" stroke={G} /></Svg> },
  { name: "重置过滤器", icon: <Svg><path d="M1 2l2 3h3l2 2M1 2l3 0 1 2M8 9h7l-3 3v3h-1.500v-3z" fill="#dedede" stroke={G} /></Svg> },
];

function SelectBox({ label, options, className }: { label: string; options: string[]; className: string }) {
  return (
    <div className={clsx("relative flex", className)}>
      <select aria-label={label} className="h-full w-full appearance-none rounded-none border border-[#9f9f9f] bg-white pl-[3px] text-[11px] text-[#111] outline-none">
        {options.map((o) => <option key={o}>{o}</option>)}
      </select>
      <Caret className="pointer-events-none absolute top-2 right-[5px]" />
    </div>
  );
}

function SelectionBar() {
  return (
    <div className="flex h-8 shrink-0 items-center border-b border-[#8b9494] bg-white">
      <button type="button" className="flex items-center gap-1 pl-[10px] text-[11px] leading-4 whitespace-nowrap">
        <Svg>
          <path d="M1 1h14v3H1z" fill="#7888d8" stroke="#4858a8" strokeWidth=".8" />
          <path d="M3 6h9M3 9h6M3 12h6M3 15h6" stroke="#777" strokeWidth="1.400" />
          <path d="M8 5l6 6-2.500.5L13 15l-1.500.5L10 12l-2 1z" fill="#fff" stroke="#333" strokeWidth=".8" />
        </Svg>
        <span>菜单(<u>M</u>)</span>
        <Caret />
      </button>
      <VSep className="mx-[6px] h-6" />
      <SelectBox label="选择过滤器" options={["没有选择过滤器"]} className="ml-[5px] h-5 w-[133px]" />
      <SelectBox label="选择范围" options={["仅在工作部件内"]} className="ml-2 h-5 w-[140px]" />
      <div className="ml-[6px] flex items-center">
        {filterIcons.map((t) => <IconCell key={t.name} label={t.name} className="w-6">{t.icon}</IconCell>)}
        <IconCell label="允许选择" className="w-6">
          <Svg className="size-[17px]">
            <path d="M.8.8h14.400v14.400H.8z" stroke="#b03838" strokeWidth="1.200" />
            <circle cx="5.500" cy="5.500" r="2" stroke="#a85020" />
            <path d="M5.500 2v7M2 5.500h7" stroke="#444" strokeWidth=".8" />
            <path d="M7 8h7l-2.500 3v3H9.500v-3z" fill="#f0b040" stroke="#a07018" strokeWidth=".6" />
          </Svg>
        </IconCell>
        <Caret className="mx-0.5" />
        <IconCell label="取消选择" className="w-[23px]">
          <Svg><path d="M1 5c1-4 6-5 8-1M1 1v4h4" stroke="#2c2c70" strokeWidth="1.300" /><circle cx="10.500" cy="10.500" r="3" stroke="#c02c2c" strokeWidth="1.200" /><path d="M10.500 5v11M5 10.500h11" stroke="#c02c2c" /></Svg>
        </IconCell>
        <IconCell label="查找" className="w-6">
          <Svg><path d="M1 4c2-4 5-3 6 0 1-3 4-3 5 0" stroke={G} strokeWidth="2" /><path d="M7 7h2v7h4M9 10h3" stroke={G} /><path d="M11 8h3v3h-3zM11 12h3v3h-3z" fill="#ccc" stroke={G} /></Svg>
        </IconCell>
        <IconCell label="矩形选择" className="w-6">
          <Svg><path d="M2 2h12v12H2z" stroke="#777" strokeWidth="1.200" strokeDasharray="2 1.500" /></Svg>
        </IconCell>
        <Caret className="mx-0.5" />
        <button type="button" aria-label="高亮显示隐藏边" aria-pressed="true" className="mr-px ml-1 flex size-[23px] items-center justify-center border border-[#a9bdbc] bg-[#c7d6d5]">
          <Svg className="size-[17px]"><path d="M1 9c1-5 4-6 8-6l6 4v4l-6 4-8-2z" fill="#eceef4" stroke="#333" strokeWidth=".9" /><path d="M1 9l8 2v4M9 11c1-3 3-4 6-4" stroke="#333" strokeWidth=".9" /><path d="M4 5l5 2" stroke="#d02c2c" strokeWidth="1.800" /></Svg>
        </button>
        <button type="button" aria-label="着色" aria-pressed="true" className="mr-0.5 flex size-[23px] items-center justify-center border border-[#a9bdbc] bg-[#c7d6d5]">
          <CubeIcon className="size-[17px]" top="#c8e4fa" left="#68b0f0" right="#3054d8"><path d="M16 1v15L2 25M16 16l14 7" stroke="#d87878" strokeWidth="1.500" /></CubeIcon>
        </button>
        {snapIcons.map((t) => <IconCell key={t.name} label={t.name} className="w-[25px]">{t.icon}</IconCell>)}
      </div>
      <VSep className="mx-[6px] h-6" />
      <div className="flex items-center">
        <IconCell label="适合窗口" className="w-[25px]">
          <Svg><path d="M1 1h14v13H1z" fill="#eef2ff" stroke="#4058b8" strokeDasharray="2 1" /><path d="M1 1h14v3H1z" fill="#4864c8" /><circle cx="8" cy="8.500" r="3.300" fill="#fff" stroke="#555" strokeWidth="1.200" /><path d="M10 11l4 4" stroke="#555" strokeWidth="1.800" />{redDot(14.500, 1.500, 1.500)}{redDot(1.500, 14.500, 1.500)}</Svg>
        </IconCell>
        <IconCell label="平移" className="w-[25px]">
          <Svg><path d="M1 2h13v10H1z" fill="#d0dcf6" stroke="#7c8cb4" /><path d="M8 9l1-2 1 2V6h1.500v3h1V6.500H14L15 12l-2 4H9.500L7 12z" fill="#f6c880" stroke="#a87838" strokeWidth=".7" /></Svg>
        </IconCell>
        <IconCell label="刷新" className="w-[25px]">
          <Svg><path d="M2.500 10C1 5 4 2 8 2c2 0 3 .5 4 2M13.500 6C15 11 12 14 8 14c-2 0-3-.5-4-2" stroke="#42549c" strokeWidth="1.600" /><path d="M14.500 2v4h-4zM1.500 14v-4h4z" fill="#42549c" /></Svg>
        </IconCell>
        <IconCell label="视图布局" className="w-[25px]">
          <Svg><path d="M1 2h14v12H1z" fill="#fff" stroke="#3c50b4" strokeWidth="1.300" /><path d="M1 2h14v2.500H1z" fill="#5068cc" /><path d="M4 6h3v3H4zM9 6h3v3H9zM4 10h3v3H4zM9 10h3v3H9z" fill="#e04434" /></Svg>
        </IconCell>
        <Caret className="mx-0.5" />
        <IconCell label="渲染样式" className="w-6">
          <Svg><path d="M3 8c0-4 3-6 6-6l1 8 5 1c0 3-8 4-12 2-2-1-2-3 0-5z" fill="#b8b8b8" stroke="#444" /><path d="M5 8c1-3 3-3 4-3M3 11l7-1" stroke="#444" /></Svg>
        </IconCell>
        <Caret className="mx-0.5" />
        <IconCell label="视图方向" className="w-[25px]"><CubeIcon className="size-[15px]" /></IconCell>
        <Caret className="mx-0.5" />
        <IconCell label="剪切截面" className="w-6">
          <Svg><path d="M1 2l4 4-4 3z" fill="#28a048" /><path d="M1 9l6 1-4 5z" fill="#d03c2c" /><path d="M8 7l4-4 4 4-4 6z" fill="#c8d0f4" stroke="#6c78b8" /><path d="M7 2v12" stroke="#888" strokeDasharray="2 1" /></Svg>
        </IconCell>
        <Caret className="mx-0.5" />
      </div>
      <VSep className="ml-[6px] h-6" />
      <div className="flex h-full flex-1 items-end justify-end pr-1 pb-2"><Caret /></div>
    </div>
  );
}

/* ---------- resource rail ---------- */

const clockFace = (
  <>
    <circle cx="12" cy="12" r="10.500" fill="#dce8fa" stroke="#5c6066" strokeWidth="2" />
    <path d="M12 4v8h6" stroke="#111" strokeWidth="2" />
    <path d="M12 3.500v1M12 19.500v1M3.500 12h1M19.500 12h1M6 6l.7.700M18 18l-.7-.700M6 18l.7-.700" stroke="#333" />
  </>
);
const wand = (
  <>
    <path d="M11 8l9 14" stroke="#111" strokeWidth="3" />
    <path d="M18 19l2 3" stroke="#ccc" strokeWidth="2" />
    <path d="M9 1l1.500 4L15 3l-2 4 4 2-5 0-1 4-2-4-4 0 3.500-2.500z" fill="#fff" />
  </>
);

// h is the height class of the cell; the icons are not evenly spaced
const RAIL: { name: string; h: string; icon: ReactNode }[] = [
  { name: "装配导航器", h: "h-12", icon: <><path d="M2 2l4-2 3 1v5l4 2v4l-5 1-6-2z" fill="#f6c838" stroke="#9a7418" /><path d="M2 7l7 2M9 9v4" stroke="#9a7418" /><path d="M14 12.500h9M5 14v10M5 18h6" stroke="#20206c" strokeWidth="1.300" /><path d="M13 17l4-2 5 1v4l-4 3-5-1z" fill="#f6c838" stroke="#9a7418" /></> },
  { name: "约束导航器", h: "h-[37px]", icon: <><path d="M3 2l8 5-8 5zM19 2l-8 5 8 5z" fill="#1c1cc0" /><path d="M11 0v24" stroke="#333" strokeDasharray="3 2" /><path d="M1 14h8v9H1z" fill="#f8f050" stroke="#555" /><path d="M13 14l9 9h-9z" fill="#c81c1c" stroke="#600" /></> },
  { name: "部件导航器", h: "h-[45px]", icon: <><path d="M1 2c0-2 9-2 9 0v8c0 2-9 2-9 0z" fill="#d888c8" stroke="#7c2c70" /><ellipse cx="5.500" cy="2.500" rx="4.500" ry="1.500" fill="#f4c8ec" stroke="#7c2c70" /><path d="M13 9.500h9M5 14v10M5 18h6" stroke="#20206c" strokeWidth="1.300" /><circle cx="17" cy="19" r="4.500" fill="#fff" stroke="#8c3474" strokeWidth="1.300" /><circle cx="17" cy="19" r="1.700" stroke="#8c3474" strokeWidth="1.300" /></> },
  { name: "重用库", h: "h-10", icon: <><path d="M0 6l5-5h18v16l-4 5H0z" fill="#fff" stroke="#555" strokeWidth=".7" /><path d="M0 6h6v16H0z" fill="#e88c3c" stroke="#9c5010" strokeWidth=".8" /><path d="M6.500 6H12v16H6.500z" fill="#3cc848" stroke="#187c24" strokeWidth=".8" /><path d="M12.500 6h6v16h-6zM18.500 6L23 1v16l-4.500 5z" fill="#3c90e0" stroke="#185090" strokeWidth=".8" /><path d="M6 6l5-5M12 6l5-5" stroke="#187c24" strokeWidth="1.500" /><path d="M1 9h4M8 9h3M14 9h4M1 19h4M8 18h3M14 17h4" stroke="#fff" strokeWidth=".8" /></> },
  { name: "HD3D 工具", h: "h-[68px]", icon: <><path d="M9 5c6-1 11 4 10 10M8 1c9-1 16 6 15 14" stroke="#4470c8" strokeWidth="2" /><circle cx="8.500" cy="15.500" r="7.500" fill="#2c84d8" stroke="#185090" /><path d="M7 14h3v5h1v1H7v-1h1v-4H7z" fill="#fff" /><circle cx="8.700" cy="11.500" r="1.400" fill="#fff" /></> },
  { name: "Web 浏览器", h: "h-10", icon: <><path d="M3 1h13l5 5v17H3z" fill="#fff" stroke="#3c64a0" strokeWidth="1.500" /><path d="M16 1v5h5" stroke="#3c64a0" /><circle cx="12" cy="14" r="6" fill="#4c94d8" /><path d="M8 11c3-4 6-2 5 1 3 1 3 4 0 7-2 0-2-4-5-5z" fill="#48a850" /></> },
  { name: "历史记录", h: "h-[66px]", icon: clockFace },
  { name: "系统材料", h: "h-5", icon: <><defs><linearGradient id="rainbow" x2="0" y2="1"><stop offset="0" stopColor="#f42c1c" /><stop offset=".3" stopColor="#f8f020" /><stop offset=".6" stopColor="#28d83c" /><stop offset=".8" stopColor="#20d0f0" /><stop offset="1" stopColor="#1c30e0" /></linearGradient></defs><path d="M2 1h8v22H2z" fill="url(#rainbow)" />{wand}</> },
  { name: "Process Studio", h: "h-16", icon: <><path d="M3 2h6v19H3z" fill="#3c84d0" stroke="#285ca0" strokeDasharray="1 1" /><path d="M12 5h11l-3 5h-8M1 14h10" stroke="#3c64b8" strokeWidth="1.500" />{wand}<path d="M1 21h9" stroke="#c8c02c" strokeWidth="2" strokeDasharray="2 1" /></> },
  { name: "加工向导", h: "h-5", icon: <><path d="M8 2l6-1h4l3 3-1 2-3-2-3 0-4 8-2-1 4-7-4 1z" fill="#b8bcc4" stroke="#444" /><path d="M2 10l0 4 4 3 3-1 4 6h4l0-4-7-5 0-4-3-1v4l-2 0z" fill="#9aa0ac" stroke="#444" /><path d="M1 22c0-5 4-5 6-3l-1 3z" fill="#f0a030" /></> },
  { name: "角色", h: "h-[62px]", icon: <><path d="M1 3l5-2v20l-5 2zM6 1h3v18H6" fill="#f2f2f2" stroke="#777" /><path d="M8 1h15v17H8z" fill="#fff" stroke="#444" /><path d="M10 4h11v9H10z" fill="#d03030" /><path d="M13 4h5v6h-5z" fill="#88b8f4" /><path d="M12 13c0-4 7-4 7 0z" fill="#f4a040" /></> },
];

function ResourceRail() {
  return (
    <aside className="flex w-8 shrink-0 flex-col border-r border-[#a8a8a8] bg-[#dcdcdc]">
      <button type="button" aria-label="资源条选项" className="mb-3 flex h-[27px] items-center justify-center pr-0.5">
        <Svg>
          <circle cx="8" cy="8" r="4.500" stroke="#333" strokeWidth="1.400" />
          <path d="M8 1v2M8 13v2M1 8h2M13 8h2M3 3l1.500 1.500M13 3l-1.500 1.500M3 13l1.500-1.500M13 13l-1.500-1.500" stroke="#333" strokeWidth="1.600" />
        </Svg>
      </button>
      {RAIL.map((r) => (
        <button
          key={r.name}
          type="button"
          aria-label={r.name}
          className={clsx(
            "flex items-center justify-center",
            r.h,
            r.name === "部件导航器" && "-mr-px ml-[2px] border border-r-0 border-[#a8a8a8] bg-white"
          )}
        >
          <Svg box="0 0 24 24" className="ml-1 size-[23px]">{r.icon}</Svg>
        </button>
      ))}
    </aside>
  );
}

/* ---------- part navigator ---------- */

const dots = { stroke: "#999", strokeDasharray: "1 1" };

function Guide({ kind }: { kind: "first" | "plus" | "minus" | "child" | "last" }) {
  if (kind === "child" || kind === "last") {
    return (
      <Svg box="0 0 38 20" className="h-5 w-[38px]">
        <path d={kind === "child" ? "M28.500 0v20M28.500 10.500h9" : "M28.500 0v10.500h9"} {...dots} />
      </Svg>
    );
  }
  return (
    <Svg box="0 0 18 20" className="h-5 w-[18px]">
      <path d={kind === "first" ? "M9.500 20v-9.500H18" : kind === "plus" ? "M9.500 0v20M9.500 10.500H18" : "M9.500 0v10.500H18"} {...dots} />
      {kind !== "first" && (
        <>
          <path d="M5.500 6.500h8v8h-8z" fill="#fff" stroke="#cfcfcf" />
          <path d={kind === "plus" ? "M7 10.500h5M9.500 8v5" : "M7 10.500h5"} stroke="#222" />
        </>
      )}
    </Svg>
  );
}

const datumIcon = (
  <Svg>
    <path d="M2 2v10l9 4M2 9L14 3M2 5l11 8M6 8v7M10 5v8" stroke="#444" strokeWidth="1.100" />
    <path d="M0 1.500h3M1.500 0v3" stroke="#2c2cc0" />
    <path d="M12 2l4 0-2 3z" fill="#2c9c44" />
    <path d="M9 14l4 2-4 0z" fill="#d03030" stroke="#d03030" />
  </Svg>
);

interface TreeRow {
  guide: "first" | "plus" | "minus" | "child" | "last";
  name: string;
  icon: ReactNode;
  tick?: boolean;
  box?: boolean;
  bold?: boolean;
}

const TREE: TreeRow[] = [
  { guide: "first", name: "历史记录模式", icon: <Svg box="0 0 24 24">{clockFace}</Svg> },
  { guide: "plus", name: "模型视图", icon: <Svg><path d="M7 1l5 3v7l-5 3-5-3V4zM2 4l5 3 5-3M7 1v13M2 11l5-3 5 3" stroke="#23804c" /><path d="M8 15l7-4" stroke="#e0502c" strokeWidth="1.500" /></Svg> },
  { guide: "plus", name: "摄像机", tick: true, icon: <Svg><path d="M1 4l9-3 3 2v9l-9 3-3-1z" stroke="#c83828" strokeWidth="1.200" fill="#fff" /><path d="M4 5h7v6H4z" fill="#8c88b8" /><circle cx="7.500" cy="8" r="2" fill="#c0c8f4" stroke="#222" /><circle cx="13" cy="10" r="2" stroke="#333" strokeWidth="1.500" /></Svg> },
  { guide: "minus", name: "模型历史记录", icon: <Svg><path d="M1 3h5l1 2h6v3H4L1 14z" fill="#e8b838" stroke="#8c6814" strokeWidth=".8" /><path d="M4 8h12l-3 7H1z" fill="#fbd860" stroke="#8c6814" strokeWidth=".8" /></Svg> },
  { guide: "child", name: "基准坐标系 (0)", icon: datumIcon, box: true },
  { guide: "last", name: "块 (1)", icon: <CubeIcon />, box: true, bold: true },
];

const EMPTY_ROWS = Array.from({ length: 60 }, (_, i) => i);

function NavigatorTable() {
  return (
    <table className="w-full table-fixed border-collapse text-left text-[12px] leading-[18px] text-[#1a1a1a]">
      <colgroup>
        <col className="w-[199px]" />
        <col className="w-[100px]" />
        <col />
      </colgroup>
      <thead className="bg-[#efefef]">
        <tr className="h-[21px]">
          <th className="border-r border-b border-[#d4d4d4] p-0 pl-[6px] font-normal">
            <span className="flex items-center gap-[18px]">
              名称
              <svg viewBox="0 0 10 6" className="h-[6px] w-[10px]" aria-hidden="true"><path d="M0 6h10L5 0z" fill="#1c1c1c" /></svg>
            </span>
          </th>
          <th className="border-r border-b border-[#d4d4d4] p-0 pl-[6px] font-normal">最新</th>
          <th className="overflow-hidden border-b border-[#d4d4d4] p-0 pl-[6px] font-normal whitespace-nowrap">附注</th>
        </tr>
      </thead>
      <tbody>
        {TREE.map((r, i) => (
          <tr key={r.name} className={clsx("h-5", i % 2 === 1 && "bg-[#f9f9f9]")}>
            <td className="border-r border-b border-[#e6e6e6] p-0">
              <div className="-my-px flex h-5 items-center">
                <Guide kind={r.guide} />
                {r.box && (
                  <label className="relative mx-0.5 flex size-3 shrink-0">
                    <input type="checkbox" defaultChecked aria-label={r.name} className="peer size-3 appearance-none border border-black bg-white" />
                    <Check className="pointer-events-none absolute inset-0 size-3 opacity-0 peer-checked:opacity-100" />
                  </label>
                )}
                {r.tick && <Check className="ml-[2px] size-[13px]" />}
                <span className="mx-px flex">{r.icon}</span>
                <span className={clsx("pl-0.5", r.bold && "font-bold")}>{r.name}</span>
              </div>
            </td>
            <td className="border-r border-b border-[#e6e6e6] p-0 pl-[5px]">{r.box && <Check />}</td>
            <td className="border-b border-[#e6e6e6] p-0" />
          </tr>
        ))}
        {EMPTY_ROWS.map((i) => (
          <tr key={i} className={clsx("h-5", i % 2 === 1 && "bg-[#f9f9f9]")}>
            <td className="border-r border-b border-[#e6e6e6] p-0" />
            <td className="border-r border-b border-[#e6e6e6] p-0" />
            <td className="border-b border-[#e6e6e6] p-0" />
          </tr>
        ))}
      </tbody>
    </table>
  );
}

function PartNavigator() {
  return (
    <section className="flex w-[332px] shrink-0 flex-col border-r border-[#8b9494] bg-white pr-[10px] pb-[5px] pl-[6px]">
      <div className="flex h-7 items-center justify-between pt-px pr-[6px] pl-1">
        <h2 className="text-[12px] leading-4 text-[#222]">部件导航器</h2>
        <button type="button" aria-label="最大化" className="h-[11px] w-3 border border-black" />
      </div>
      <div className="flex min-h-0 flex-1 flex-col border border-[#d4d4d4] p-px">
        <div className="min-h-0 flex-1 overflow-hidden">
          <NavigatorTable />
        </div>
        <div className="flex h-4 items-center bg-[#f0f0f0]">
          <button type="button" aria-label="向左滚动" className="flex w-[17px] justify-center">
            <Svg box="0 0 8 8" className="size-2"><path d="M6 0L2 4l4 4" stroke="#444" strokeWidth="1.800" /></Svg>
          </button>
          <div className="h-[15px] w-[216px] bg-[#cdcdcd]" />
          <button type="button" aria-label="向右滚动" className="ml-auto flex w-[17px] justify-center">
            <Svg box="0 0 8 8" className="size-2"><path d="M2 0l4 4-4 4" stroke="#444" strokeWidth="1.800" /></Svg>
          </button>
        </div>
      </div>
      <div className="mt-px h-[5px] border border-[#b0b0b0] bg-[#d8d8d8]" />
      {["相依性", "细节", "预览"].map((s) => (
        <button key={s} type="button" className="flex h-6 items-center justify-between border-b-2 border-[#cfcfcf] pr-[5px] pl-[7px] text-[14px] leading-5 text-[#3a7fa6]">
          {s}
          <Chevron />
        </button>
      ))}
    </section>
  );
}

/* ---------- graphics window ---------- */

function Model() {
  return (
    <svg viewBox="860 450 520 270" className="absolute top-[270px] left-[496px] h-[270px] w-[520px] font-['Noto_Sans']" aria-label="块">
      <path d="M1294 523l-8 67-32 110 8-65z" fill="#c87600" stroke="#3c2c10" strokeWidth=".6" />
      <path d="M938 470.500L1294 523l-32 112L906 583z" fill="#ffc400" stroke="#2c2410" strokeWidth="1" />
      <path d="M906 583l356 52-8 65-356-52z" fill="#508646" />
      <path d="M906 583l356 52" stroke="#8ca030" strokeWidth="1" />
      <path d="M898 648l355 53" stroke="#f0a04c" strokeWidth="3" />
      <path d="M1258 640l-4 60" stroke="#a8d8a0" strokeWidth="1" />
      <path d="M907 587l65 10-7 59" fill="none" stroke="#1c3cc0" strokeWidth="1.200" />
      <path d="M906 622l65 10-5 23M898 648l10-62 3-46" fill="none" stroke="#e0e0e0" strokeWidth="1" />
      <path d="M906 582l5-40" stroke="#2830d0" strokeWidth="1.200" />
      <path d="M912 526l-4 17h7z" fill="#0c0cb0" />
      <path d="M900 640c-1-16 0-32 4-40l1 14-3 20z" fill="#1c6cb4" />
      <path d="M898 646l10-48-4 38z" fill="#a8d4c8" opacity=".6" />
      <path d="M908 602l3-9 3 9z" fill="#d8d8d8" />
      <circle cx="911" cy="602" r="3" fill="#b8b8b8" />
      <path d="M893 648h6M897.500 643v9" stroke="#2c2cd0" />
      <path d="M920 650l26 3-4 3z" fill="#c84c20" />
      <path d="M1013 663l9 2-9 3M1021 667l9 0" fill="none" stroke="#2c20d0" />
      <path d="M1013 665l8 2" stroke="#e04830" strokeWidth="2" />
      <g fill="#94803c" stroke="#7c6828" strokeWidth=".5">
        <path d="M1261 634l6-59h4l-7 59z" />
        <path d="M1271 558l-6 16 8 2z" />
      </g>
      <g fill="#c0a850" stroke="#94803c" strokeWidth=".5">
        <path d="M1264 634l66 9-1 4-66-10z" />
        <path d="M1346 649l-16-8-1 8z" />
        <path d="M1259 638l-6 20 2 1 7-20z" />
        <path d="M1250 657l8 2-5 11z" />
        <circle cx="1262" cy="635" r="4" />
      </g>
      <g fontSize="13">
        <text x="909" y="526" fill="#1c24d0">Z</text>
        <text x="886" y="595" fill="#2c50c8">ZC</text>
        <text x="888" y="625" fill="#2c9048">YC</text>
        <text x="909" y="596" fill="#d8d8d8">Y</text>
        <text x="938" y="670" fill="#c83430">XC</text>
        <text x="1032" y="673" fill="#2020c0">X</text>
        <text x="1272" y="552" fill="#a89448">Y</text>
        <text x="1352" y="649" fill="#a09058">X</text>
      </g>
    </svg>
  );
}

function ViewTriad() {
  return (
    <svg viewBox="420 895 70 75" className="absolute top-[715px] left-[56px] h-[75px] w-[70px] font-['Noto_Sans']" aria-label="视图三重轴">
      <path d="M436 915l26 4-5 33-25-4z" fill="#d4d6d8" stroke="#aaa" strokeWidth=".8" />
      <path d="M435 926l25 4M434 939l24 4" stroke="#b0b0b0" strokeWidth=".8" />
      <path d="M430 946l2-26h3l-2 27z" fill="#1434c0" />
      <path d="M434 909l-4 11h7z" fill="#1434c0" />
      <path d="M434 949l28 4v3l-28-4z" fill="#d02c2c" />
      <path d="M474 957l-12-5-1 6z" fill="#c82020" />
      <circle cx="430" cy="950" r="4.500" fill="#e4e4e4" stroke="#888" strokeWidth=".5" />
      <text x="432" y="909" fontSize="12" fill="#4468d8">Z</text>
      <text x="476" y="962" fontSize="12" fill="#d84c4c">X</text>
    </svg>
  );
}

/* ---------- create sketch dialog ---------- */

function Section({ title, open = true, children }: { title: string; open?: boolean; children?: ReactNode }) {
  return (
    <section className="border-b-2 border-[#cbcbcb] bg-white">
      <button
        type="button"
        className={clsx("flex w-full items-center justify-between pr-[6px] pl-[7px] text-[14px] leading-5 text-[#2f80ac]", open ? "h-[26px]" : "h-[22px]")}
      >
        {title}
        <Chevron up={open} />
      </button>
      {open && <div className="flex flex-col gap-0.5 px-[9px] pt-1 pb-[7px]">{children}</div>}
    </section>
  );
}

const flipIcon = (
  <Svg box="0 0 18 18" className="size-[18px]">
    <path d="M3 4l12 10" stroke="#222" strokeWidth="1.200" />
    <path d="M14 4l-3 3M4 15l3-4" stroke="#1c1c9c" strokeWidth="2" />
    <path d="M11 2h5v5zM3 11v5h5z" fill="#1c1c9c" />
  </Svg>
);

function FlipRow() {
  return (
    <div className="flex items-center justify-between">
      <span>反向</span>
      <button type="button" aria-label="反向" className="flex size-6 items-center justify-center border border-[#a8a8a8] bg-white">{flipIcon}</button>
    </div>
  );
}

function SketchDialog() {
  return (
    <div role="dialog" aria-label="创建草图" className="absolute top-[99px] left-[66px] w-[328px] border border-t-0 border-[#bcbdbf] bg-[#e8e8e8] text-[12px] leading-4 text-[#1a1a1a]">
      <div className="-mx-px flex h-6 items-center bg-[#5c8983] px-2 text-white">
        <Svg className="size-[15px]">
          <circle cx="8" cy="8" r="4.800" stroke="#fff" strokeWidth="1.700" />
          <circle cx="8" cy="8" r="1.200" fill="#fff" />
          <path d="M8 .5v3M8 12.500v3M.5 8h3M12.500 8h3M2.700 2.700l2 2M13.300 2.700l-2 2M2.700 13.300l2-2M13.300 13.300l-2-2" stroke="#fff" strokeWidth="2" />
        </Svg>
        <h2 className="ml-[9px] text-[13px] leading-5">创建草图</h2>
        <button type="button" aria-label="重置" className="ml-auto">
          <Svg className="size-[15px]"><path d="M9 2.500c6 1 6 11 0 11.500-5 .5-7-4-5.500-7.500" stroke="#fff" strokeWidth="1.800" /><path d="M1 8l3-4 3 4z" fill="#fff" /></Svg>
        </button>
        <button type="button" aria-label="关闭" className="ml-[5px]">
          <Svg className="size-[15px]"><path d="M3 3l10 10M13 3L3 13" stroke="#fff" strokeWidth="2.200" /></Svg>
        </button>
      </div>
      <div className="flex flex-col gap-[3px] p-[5px] pt-1">
        <Section title="草图类型">
          <div className="relative h-[26px]">
            <select aria-label="草图类型" className="h-full w-full appearance-none rounded-none border border-[#a8a8a8] bg-white pl-6 outline-none">
              <option>在平面上</option>
            </select>
            <Svg className="pointer-events-none absolute top-[5px] left-[5px] size-[15px]">
              <path d="M5 2l10 2v11L4 13V6" stroke="#444" />
              <path d="M2 1l2 0 5 7-1 1-2-1z" fill="#f6c040" stroke="#94681c" strokeWidth=".7" />
              <path d="M1 1h3L2 4z" fill="#c84830" />
            </Svg>
            <Caret className="pointer-events-none absolute top-[11px] right-[5px]" />
          </div>
        </Section>

        <Section title="草图平面">
          <div className="flex items-center justify-between">
            <label htmlFor="plane-method">平面方法</label>
            <div className="relative h-[25px] w-[152px]">
              <select id="plane-method" className="h-full w-full appearance-none rounded-none border border-[#a8a8a8] bg-white pl-1 outline-none">
                <option>自动判断</option>
              </select>
              <Caret className="pointer-events-none absolute top-[11px] right-[5px]" />
            </div>
          </div>
          <div className="flex items-center">
            <Check className="mr-[5px] ml-[2px] size-[13px]" />
            <span>选择平的面或平面 (1)</span>
            <button type="button" aria-label="选择平的面或平面" className="ml-auto flex size-8 items-center justify-center border border-[#a8a8a8] bg-white">
              <Svg box="0 0 20 20" className="size-5"><circle cx="10" cy="10" r="5.500" stroke="#c82020" strokeWidth="1.400" /><path d="M10 0v20M0 10h20" stroke="#222" /></Svg>
            </button>
          </div>
          <FlipRow />
        </Section>

        <Section title="草图方向">
          <div className="flex items-center justify-between">
            <label htmlFor="reference">参考</label>
            <div className="flex h-[25px] w-[152px] items-center border border-[#a8a8a8] bg-white pl-0.5">
              <select id="reference" className="h-[19px] flex-1 appearance-none rounded-none border border-dotted border-[#c07830] bg-[#3399ff] pl-px text-white outline-none">
                <option>水平</option>
              </select>
              <Caret className="mr-[5px] ml-[6px]" />
            </div>
          </div>
          <div className="flex gap-0.5">
            <div className="flex flex-1 items-center bg-[#fbd66e]">
              <Check className="mr-[5px] ml-[2px] size-[13px]" />
              <span>选择参考 (1)</span>
            </div>
            <button type="button" aria-label="选择参考" className="flex size-8 items-center justify-center border border-[#f0d480] bg-[#f9e9b0]">
              <CubeIcon className="size-[23px]" top="#dcecfc" left="#b8ccf8"><path d="M2 8l17 6" stroke="#c82c2c" strokeWidth="2" /><path d="M1 14l9 1v-2l5 6-6 1v-2l-8-1z" fill="#f08030" /></CubeIcon>
            </button>
          </div>
          <FlipRow />
        </Section>

        <Section title="草图原点">
          <div className="flex h-8 items-center">
            <Check className="mr-[5px] ml-[2px] size-[13px]" />
            <span>指定点</span>
            <button type="button" aria-label="点对话框" className="mr-0.5 ml-auto flex size-6 items-center justify-center border border-[#a8a8a8] bg-white">
              <Svg box="0 0 18 18" className="size-[18px]"><path d="M11 1v9M6.500 5.500h9" stroke="#222" strokeWidth="1.200" /><path d="M1 8c0 4 1 5 4 5" stroke="#e08030" strokeWidth="1.500" /><path d="M5 10l4 3-4 3z" fill="#e08030" /><path d="M9 16h2M12.500 16h2M16 16h2" stroke="#222" strokeWidth="2" /></Svg>
            </button>
            <button type="button" aria-label="端点" className="flex h-8 w-[49px] items-center justify-between border border-[#a8a8a8] bg-white pr-1 pl-[5px]">
              <Svg box="0 0 22 22" className="size-[22px]"><path d="M1 20L18 3" stroke="#222" strokeWidth="1.300" />{redDot(18.500, 3, 2.2)}</Svg>
              <Caret />
            </button>
          </div>
        </Section>

        <Section title="设置" open={false} />
      </div>
      <div className="flex justify-end gap-[5px] pt-[6px] pr-[15px] pb-[11px]">
        <button type="button" className="h-[25px] w-[54px] border border-[#4a90b8] bg-[#99cbe6] whitespace-nowrap">&lt; 确定 &gt;</button>
        <button type="button" className="h-[25px] w-[54px] border border-[#adadad] bg-[#cbcccf]">取消</button>
      </div>
    </div>
  );
}

/* ---------- desktop overlays ---------- */

const IME_ICONS: ToolItem[] = [
  { name: "中英文", icon: <path d="M2 14L7 2h2l5 12M4.500 10h7" stroke="#2c80e8" strokeWidth="2" /> },
  { name: "半角", icon: <path d="M10 2c6 5 2 13-5 12-2 0-3-1-4-3 6 1 9-3 9-9z" fill="#2c80e8" /> },
  { name: "中文标点", icon: <><circle cx="4" cy="8" r="1.700" fill="#2c80e8" /><path d="M10 6h3v4l-2 4h-1l1-4h-1z" fill="#2c80e8" /></> },
  { name: "设置", icon: <path d="M1 13l6-6c-1-3 2-6 5-5L10 4l1 2 2 .5L15 4c1 3-2 6-5 5l-6 6c-2 1-4-1-3-2z" fill="#2c80e8" /> },
  { name: "表情", icon: <><circle cx="8" cy="8" r="7" stroke="#2c80e8" strokeWidth="1.800" /><path d="M4.500 9c1 4 6 4 7 0M5.500 5v2M10.500 5v2" stroke="#2c80e8" strokeWidth="1.500" /></> },
  { name: "皮肤", icon: <path d="M1 4l4-2c1 2 5 2 6 0l4 2-1 4h-2v7H4V8H2z" fill="#2c80e8" /> },
  { name: "工具箱", icon: <path d="M1 1h6v6H1zM9 1h6v6H9zM1 9h6v6H1zM9 9h6v6H9zM11 3v2h2V3z" fill="#2c80e8" fillRule="evenodd" /> },
  { name: "锁定", icon: <path d="M4 7h8v8H4zM6 7V2h4v5M8 10v3" stroke="#2c80e8" strokeWidth="1.200" /> },
];

function Hamster() {
  return (
    <svg viewBox="0 0 50 50" className="absolute bottom-[-1px] left-0 size-[50px]" aria-label="输入法皮肤">
      <circle cx="25" cy="25" r="23.500" fill="#fff" stroke="#2c84e8" strokeWidth="2" />
      <path d="M13 14c-4-6 0-9 4-6l3 3h9c1-5 6-7 9-3 2 3 0 6-2 7 5 6 5 13-1 18 4 4 4 8 1 13H13c-3-4-3-8 0-13-6-5-6-14 0-19z" fill="#f1f2dc" stroke="#999" strokeWidth=".7" />
      <path d="M13 11c-1-4 2-4 4 0l-3 3zM32 11c1-4 5-4 5 0l-3 4z" fill="#f4a4a8" />
      <circle cx="17" cy="20" r="4" fill="#222" />
      <circle cx="31" cy="23" r="4" fill="#222" />
      <circle cx="18" cy="18.500" r="1.300" fill="#fff" />
      <circle cx="32" cy="21.500" r="1.300" fill="#fff" />
      <path d="M20 28c2 3 4 2 4 0 0 2 3 3 5 1M5 23l6 1M5 29l6-1M39 29l6 2" stroke="#888" fill="none" strokeWidth=".7" />
      <path d="M13 37l4 2-3 3zM34 37l-4 3 4 2zM24 38l3 0-2 3z" fill="#e0a890" />
      <path d="M11 46h26" stroke="#222" strokeWidth="2" />
    </svg>
  );
}

function ImeBar() {
  return (
    <div className="absolute right-0 bottom-0 h-[61px] w-[226px] overflow-hidden">
      <div className="absolute right-0 bottom-[-2px] left-6 flex h-[29px] items-center rounded-r-full border border-[#3c90ec] bg-white pl-[28px]">
        {IME_ICONS.map((t) => (
          <button key={t.name} type="button" aria-label={t.name} className="flex w-[22px] shrink-0 justify-center last:w-4">
            <Svg className={t.name === "锁定" ? "size-3" : "size-[14px]"}>{t.icon}</Svg>
          </button>
        ))}
      </div>
      <div className="absolute top-[17px] left-[53px] flex gap-px">
        {[0, 1, 2, 3, 4, 5].map((i) => (
          <Svg key={i} className="size-[14px]">
            <circle cx="8" cy="8" r="6.500" stroke="#e88c2c" strokeWidth="3" strokeDasharray="2.500 1.600" />
            <circle cx="8" cy="8" r="5" fill="#f8d054" stroke="#d88424" />
            <path d="M5.500 7h1.500M9 7h1.500M5.500 10h5" stroke="#94501c" />
          </Svg>
        ))}
      </div>
      <Hamster />
      <div className="absolute top-0 left-[92px] flex h-[27px] w-[131px] items-center justify-between border border-[#8cbcec] bg-white pr-[6px] pl-[11px] text-[12px] leading-4 whitespace-nowrap text-[#222]">
        工具箱快捷入口
        <button type="button" aria-label="关闭提示">
          <Svg className="size-3"><path d="M2 2l12 12M14 2L2 14" stroke="#a8b4c4" strokeWidth="2.200" /></Svg>
        </button>
        <Svg box="0 0 12 6" className="absolute top-[25px] right-[20px] h-[6px] w-3"><path d="M0 0l6 5.500L12 0z" fill="#fff" stroke="#8cbcec" /><path d="M1 0h10" stroke="#fff" strokeWidth="1.500" /></Svg>
      </div>
    </div>
  );
}

const METER_BARS = Array.from({ length: 15 }, (_, i) => i);

function meterColor(i: number) {
  if (i < 3) return "#2c2430";
  if (i < 5) return "#f0903c";
  if (i < 9) return "#e8c860";
  return i < 12 ? "#b8dc88" : "#5cd4c4";
}

function LevelMeter() {
  return (
    <div className="absolute top-[446px] right-0 flex h-[58px] w-2 justify-end rounded-l-[3px] border border-r-0 border-[#2c2430] bg-[#54445c] pt-[6px] shadow-[0_0_5px_2px_#f05070]">
      <svg viewBox="0 0 4 45" className="h-[45px] w-1" aria-hidden="true">
        {METER_BARS.map((i) => <rect key={i} y={i * 3} width="4" height="2" fill={meterColor(i)} />)}
      </svg>
    </div>
  );
}

function GraphicsWindow() {
  return (
    <main className="relative min-w-0 flex-1 overflow-hidden bg-linear-to-b from-[#b3b4b6] via-[#d5d6d8] to-[#e8eaec]">
      <Model />
      <ViewTriad />
      <SketchDialog />
      <LevelMeter />
    </main>
  );
}

export default function App() {
  return (
    <div className="relative flex h-screen flex-col overflow-hidden bg-white font-['Noto_Sans','Noto_Sans_CJK_SC',sans-serif] text-[#1a1a1a]">
      <TitleBar />
      <TabBar />
      <Ribbon />
      <SelectionBar />
      <div className="flex min-h-0 flex-1">
        <ResourceRail />
        <PartNavigator />
        <GraphicsWindow />
      </div>
      <footer className="h-[21px] shrink-0 border-t border-[#a8a8a8] bg-white pl-[3px] text-[11px] leading-5 font-medium text-[#111]">
        选择水平参考或双击要定向的轴
      </footer>
      {/* edge of a panel docked above the window */}
      <div className="absolute top-[-10px] right-[179px] h-[10px] w-[284px] rounded-md shadow-[0_1px_5px_1px_#888]" />
      <ImeBar />
    </div>
  );
}
